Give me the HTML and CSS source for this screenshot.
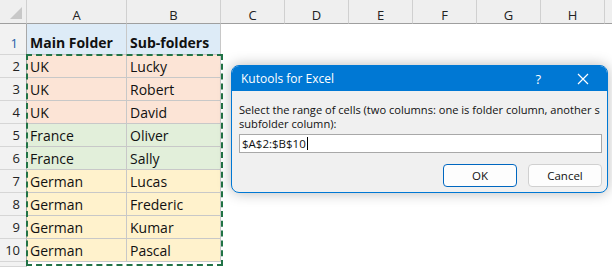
FILE: index.html
```html
<!DOCTYPE html>
<html>
<head>
<meta charset="utf-8">
<link rel="stylesheet" href="styles.css">
</head>
<body>
<div class="sheet">
  <div class="corner"><span class="tri"></span></div>
  <div class="ch">A</div><div class="ch">B</div><div class="ch">C</div><div class="ch">D</div><div class="ch">E</div><div class="ch">F</div><div class="ch">G</div><div class="ch">H</div><div class="ch last"></div>

  <div class="rh r1">1</div><div class="c hdr">Main Folder</div><div class="c hdr">Sub-folders</div><div class="e"></div><div class="e"></div><div class="e"></div><div class="e"></div><div class="e"></div><div class="e"></div><div class="e"></div>

  <div class="rh">2</div><div class="c uk">UK</div><div class="c uk">Lucky</div><div class="e"></div><div class="e"></div><div class="e"></div><div class="e"></div><div class="e"></div><div class="e"></div><div class="e"></div>
  <div class="rh">3</div><div class="c uk">UK</div><div class="c uk">Robert</div><div class="e"></div><div class="e"></div><div class="e"></div><div class="e"></div><div class="e"></div><div class="e"></div><div class="e"></div>
  <div class="rh">4</div><div class="c uk">UK</div><div class="c uk">David</div><div class="e"></div><div class="e"></div><div class="e"></div><div class="e"></div><div class="e"></div><div class="e"></div><div class="e"></div>
  <div class="rh">5</div><div class="c fr">France</div><div class="c fr">Oliver</div><div class="e"></div><div class="e"></div><div class="e"></div><div class="e"></div><div class="e"></div><div class="e"></div><div class="e"></div>
  <div class="rh">6</div><div class="c fr">France</div><div class="c fr">Sally</div><div class="e"></div><div class="e"></div><div class="e"></div><div class="e"></div><div class="e"></div><div class="e"></div><div class="e"></div>
  <div class="rh">7</div><div class="c de">German</div><div class="c de">Lucas</div><div class="e"></div><div class="e"></div><div class="e"></div><div class="e"></div><div class="e"></div><div class="e"></div><div class="e"></div>
  <div class="rh">8</div><div class="c de">German</div><div class="c de">Frederic</div><div class="e"></div><div class="e"></div><div class="e"></div><div class="e"></div><div class="e"></div><div class="e"></div><div class="e"></div>
  <div class="rh">9</div><div class="c de">German</div><div class="c de">Kumar</div><div class="e"></div><div class="e"></div><div class="e"></div><div class="e"></div><div class="e"></div><div class="e"></div><div class="e"></div>
  <div class="rh">10</div><div class="c de">German</div><div class="c de">Pascal</div><div class="e"></div><div class="e"></div><div class="e"></div><div class="e"></div><div class="e"></div><div class="e"></div><div class="e"></div>
  <div class="rh"></div>
</div>

<div class="ants"></div>

<div class="dialog">
  <div class="titlebar">
    <span class="title">Kutools for Excel</span>
    <span class="help">?</span>
    <svg class="close" width="12" height="12" viewBox="0 0 12 12"><path d="M1 1L11 11M11 1L1 11" stroke="#fff" stroke-width="1.2" fill="none"/></svg>
  </div>
  <div class="dbody">
    <div class="label">Select the range of cells (two columns: one is folder column, another s<br>subfolder column):</div>
    <div class="input">$A$2:$B$10<span class="caret"></span></div>
    <div class="buttons">
      <div class="btn ok">OK</div>
      <div class="btn">Cancel</div>
    </div>
  </div>
</div>
</body>
</html>
```
FILE: styles.css
```css
html, body {
  margin: 0;
  padding: 0;
  background: #ffffff;
  width: 612px;
  height: 267px;
  overflow: hidden;
}
body {
  position: relative;
  font-family: "Open Sans", "Noto Sans", sans-serif;
}
.sheet {
  display: grid;
  grid-template-columns: 27px 100px 94px 64px 64px 64px 64px 64px 64px 7px;
  grid-template-rows: 24px 31px repeat(9, 23px) 5px;
}
.corner {
  background: #efefef;
  border-bottom: 1px solid #9f9f9f;
  border-right: 1px solid #d0d0d0;
  position: relative;
}
.tri {
  position: absolute;
  right: 4px;
  bottom: 4px;
  width: 0;
  height: 0;
  border-left: 12px solid transparent;
  border-bottom: 12px solid #c8c8c8;
}
.ch {
  background: #efefef;
  border-bottom: 1px solid #9f9f9f;
  border-right: 1px solid #d0d0d0;
  font-size: 13px;
  color: #222;
  display: flex;
  align-items: center;
  justify-content: center;
  padding-top: 6px;
}
.ch.last { border-right: none; }
.rh {
  background: #f2f2f2;
  border-right: 1px solid #a8a8a8;
  border-bottom: 1px solid #d6d6d6;
  font-size: 13px;
  color: #222;
  display: flex;
  align-items: flex-end;
  justify-content: flex-end;
  padding-right: 6px;
  padding-bottom: 2px;
}
.rh.r1 { color: #1f5fa8; padding-right: 8px; }
.c {
  border-right: 1px solid #c8c8c8;
  border-bottom: 1px solid #c8c8c8;
  font-size: 14px;
  color: #111;
  display: flex;
  align-items: flex-end;
  padding-left: 3px;
  padding-bottom: 1px;
  overflow: hidden;
  white-space: nowrap;
}
.hdr { background: #ddebf7; font-weight: 700; padding-bottom: 2px; }
.uk { background: #fce4d6; }
.fr { background: #e2efda; }
.de { background: #fff2cc; }
.e {
  background: #ffffff;
}
.ants {
  position: absolute;
  left: 26px;
  top: 54px;
  width: 193px;
  height: 208px;
  border: 2px dashed #217346;
}
.dialog {
  position: absolute;
  left: 231px;
  top: 65px;
  width: 375px;
  height: 126px;
  border: 1px solid #0078d4;
  border-radius: 8px;
  overflow: hidden;
  background: #f0f0f0;
  box-shadow: 0 0 14px rgba(0,0,0,0.28);
  font-family: "Open Sans", "Noto Sans", sans-serif;
}
.titlebar {
  height: 25px;
  background: #0078d4;
  display: flex;
  align-items: center;
  padding-left: 9px;
  color: #fff;
}
.title { font-size: 12px; flex: 1; }
.help { font-size: 13px; margin-right: 36px; }
.close { margin-right: 18px; }
.dbody {
  padding: 12px 5px 0 7px;
}
.label {
  font-size: 11.1px;
  line-height: 14px;
  color: #111;
  white-space: nowrap;
}
.input {
  margin-top: 3px;
  height: 17px;
  background: #fff;
  border: 1px solid #a8a8a8;
  font-size: 11.5px;
  line-height: 17px;
  padding-left: 2px;
  color: #111;
  display: flex;
  align-items: center;
}
.caret {
  display: inline-block;
  width: 1px;
  height: 13px;
  background: #000;
  margin-left: 1px;
}
.buttons {
  display: flex;
  justify-content: flex-end;
  gap: 11px;
  margin-top: 11px;
}
.btn {
  width: 72px;
  height: 21px;
  border: 1px solid #d0d0d0;
  border-radius: 4px;
  background: #fdfdfd;
  font-size: 11.5px;
  display: flex;
  align-items: center;
  justify-content: center;
  color: #111;
}
.btn.ok { border-color: #0067c0; }
```
